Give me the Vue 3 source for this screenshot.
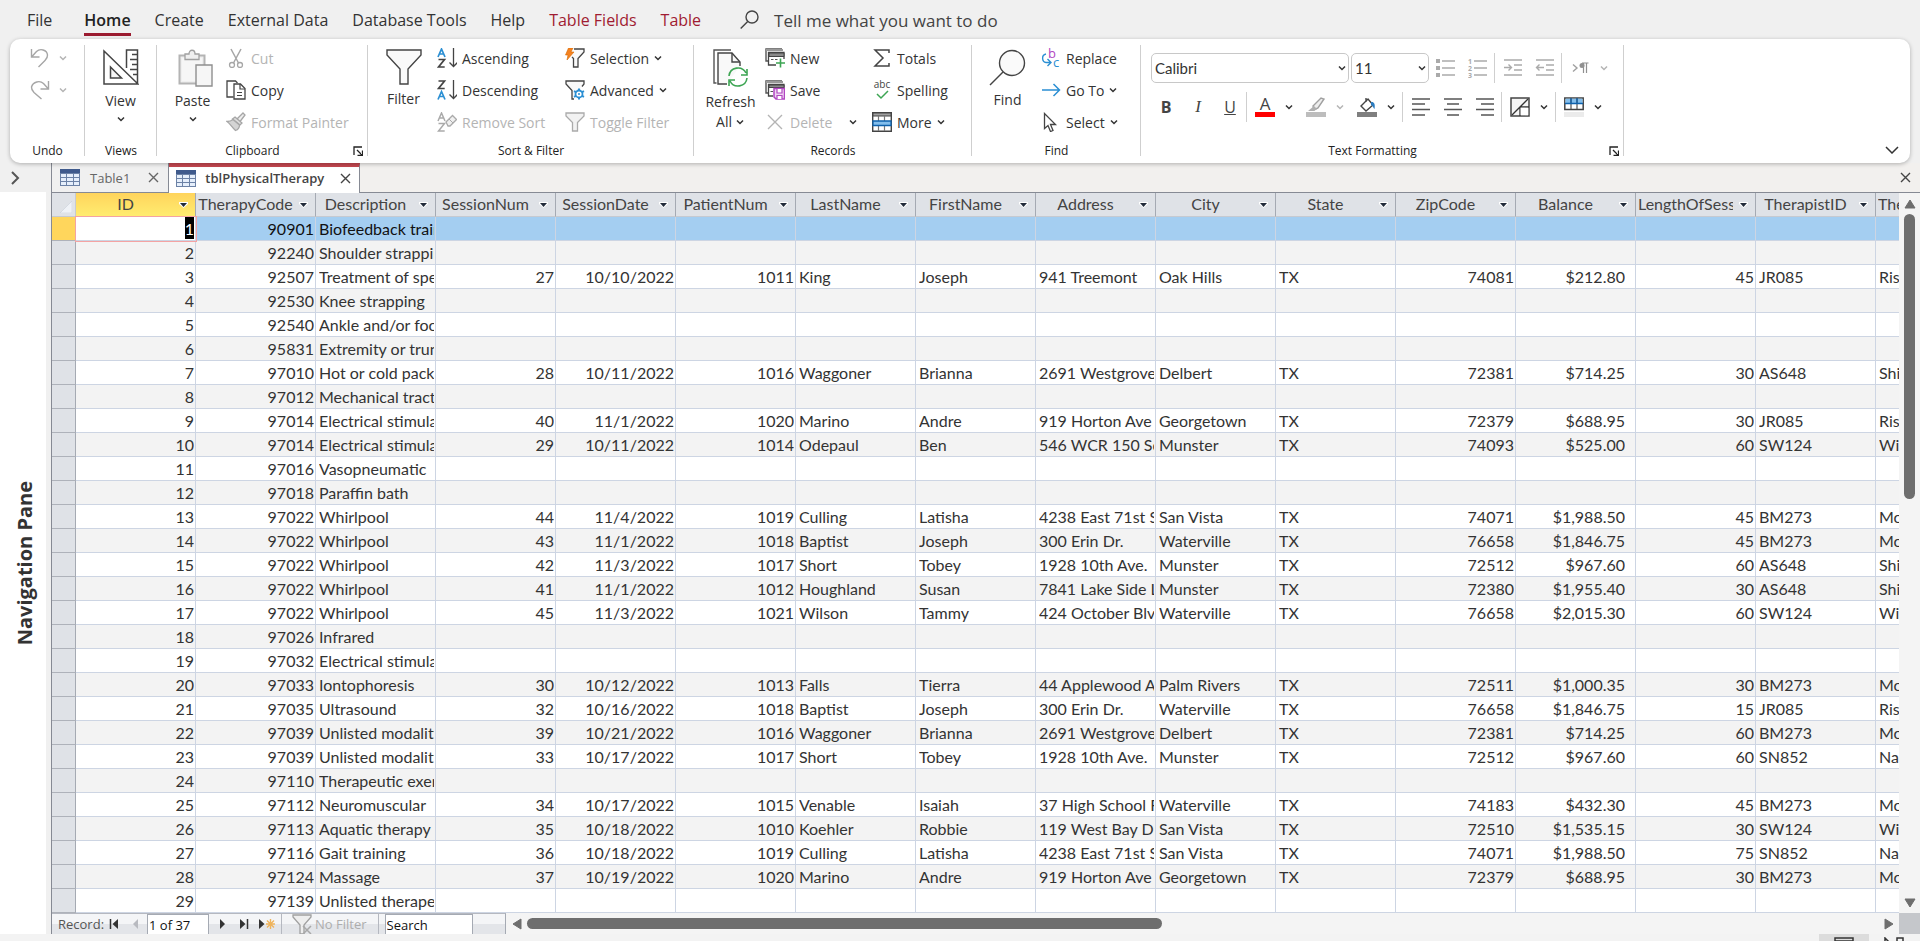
<script setup>
import { h, ref } from 'vue'

const icons = {
  undo: '<path d="M1.500 1v8h8M2 8.500 6.500 3.500C10 .2 17 1.500 17.500 7c.2 2.500-1 4-2.500 5.500L8.500 19" fill="none" stroke="#a6a6a6" stroke-width="1.400"/>',
  redo: '<path d="M18.500 1v8h-8M18 8.500 13.500 3.500C10 .2 3 1.500 1.500 7c-.2 2.500 1 4 2.500 5.500L11.500 19" fill="none" stroke="#a6a6a6" stroke-width="1.400"/>',
  chev: '<path d="m2 3.500 3 3 3-3" fill="none" stroke="currentColor" stroke-width="1.500"/>',
  view: '<path d="M23.500 19V1h11v33M1 2v33h34z" fill="#fff" stroke="#444" stroke-width="1.500"/><path d="M7.500 18v11h11z" fill="#f5f5f5" stroke="#444" stroke-width="1.500"/><path d="M29 5.500h5M27 10.500h7M29 15.500h5M27 20.500h7M30 25.500h4" stroke="#444" stroke-width="1.400"/>',
  paste: '<path d="M1.500 6.500h25v28h-25z" fill="#efefef" stroke="#b4b4b4" stroke-width="2"/><path d="M4 9h20v23H4z" fill="#f6f6f6"/><path d="M7 10.500V5h4c0-5 6-5 6 0h4v5.500z" fill="#efefef" stroke="#a0a0a0" stroke-width="1.300"/><path d="M18 16h16v21H18z" fill="#f6f6f6" stroke="#8f8f8f" stroke-width="1.400"/>',
  cut: '<path d="M5 1l7.500 14M15 1 7.500 15" stroke="#a6a6a6" stroke-width="1.500" fill="none"/><circle cx="6" cy="17" r="2.500" fill="none" stroke="#a6a6a6" stroke-width="1.300"/><circle cx="14" cy="17" r="2.500" fill="none" stroke="#a6a6a6" stroke-width="1.300"/>',
  copy: '<path d="M7.500 17H1V1h8.500l2 2" fill="#fff" stroke="#444" stroke-width="1.300"/><path d="M8 4h6.500L19 8.500V19H8z" fill="#fff" stroke="#444" stroke-width="1.300"/><path d="M14 4v5h5M11 12.500h5M11 15.500h5" fill="none" stroke="#444" stroke-width="1.200"/>',
  painter: '<path d="m11 7 6-6 2 2-5 6.500" fill="#eee" stroke="#a6a6a6" stroke-width="1.300"/><path d="m9 5 7 6-2 2-7.500-6z" fill="#ddd" stroke="#a6a6a6" stroke-width="1.300"/><path d="M7 7.500c-2 1.700-4 2-6 2 3 2 5 6 8.500 9 3-1 4-3 4-5.500z" fill="#d4d4d4" stroke="#a6a6a6" stroke-width="1.300"/>',
  filterBig: '<path d="M1 1h34v5L22 20v15h-8V20L1 6z" fill="#f9f9f9" stroke="#444" stroke-width="1.400"/>',
  asc: '<path d="m1 9 3.500-8L8 9M2.200 6h4.600" fill="none" stroke="#2b8fd3" stroke-width="1.700"/><path d="M1.500 11.500h6l-6 7.500h6.200" fill="none" stroke="#444" stroke-width="1.700"/><path d="M16.500 0v18.500M12.500 14.500l4 4 4-4" fill="none" stroke="#444" stroke-width="1.300"/>',
  desc: '<path d="m1 19.500 3.500-8 3.500 8M2.200 16.500h4.600" fill="none" stroke="#2b8fd3" stroke-width="1.700"/><path d="M1.500 1h6l-6 7.500h6.200" fill="none" stroke="#444" stroke-width="1.700"/><path d="M16.500 0v18.500M12.500 14.500l4 4 4-4" fill="none" stroke="#444" stroke-width="1.300"/>',
  unsort: '<path d="m1 9 3.500-8L8 9M2.200 6h4.600M1.500 11.500h6l-6 7.500h6.200" fill="none" stroke="#aaa" stroke-width="1.500"/><path d="m9 10 6.500-6.500 4 4L13 14H11z" fill="#f0f0f0" stroke="#aaa" stroke-width="1.300"/><path d="m12 7 4 4" stroke="#aaa"/>',
  selection: '<path d="M9 1h10v3l-6 6.500V19H8.500v-8.500L7 9" fill="#f9f9f9" stroke="#444" stroke-width="1.300"/><path d="M3.500 0H8L6 4h3L2 12l1-5H.5z" fill="#f58220" stroke="#d56a00" stroke-width=".6"/>',
  advanced: '<path d="M9 19H7v-8.500L1 4V1h18v3l-2 2.500" fill="#f9f9f9" stroke="#444" stroke-width="1.300"/><circle cx="14" cy="14" r="3.500" fill="#fff" stroke="#2b8fd3" stroke-width="1.800"/><path d="M14 8.500v2M14 17.500v2M9 11.200l2 1M17 15.800l2 1M9 16.800l2-1M17 12.200l2-1" stroke="#2b8fd3" stroke-width="2"/><circle cx="14" cy="14" r="1" fill="#2b8fd3"/>',
  toggle: '<path d="M1 1h18v3l-6.500 6.500V19h-5v-8.500L1 4z" fill="#f2f2f2" stroke="#aaa" stroke-width="1.300"/>',
  refresh: '<path d="M3.500 34H1V1h17" fill="none" stroke="#555" stroke-width="1.400"/><path d="M14 35H5V4h14l8 9v4" fill="#f9f9f9" stroke="#444" stroke-width="1.400"/><path d="M19 4v9h8" fill="none" stroke="#444" stroke-width="1.400"/><path d="M16 27c1-9 13-11 17-3M34 20v6h-6M34 29c-1 9-13 11-17 3M16 37v-6h6" fill="none" stroke="#3da553" stroke-width="1.600"/>',
  rnew: '<path d="M3 13H1V1h16" fill="none" stroke="#555" stroke-width="1.400"/><path d="M1 1h17v2H1z" fill="#999"/><path d="M11 17H3.500V4.500H19V11" fill="#fff" stroke="#444" stroke-width="1.300"/><path d="M4 5h15v3.500H4z" fill="#8a8a8a" stroke="#444" stroke-width="1"/><path d="M6 11.500h2.500M10 11.500h2.500" stroke="#555" stroke-width="1.200"/><path d="M15.500 10.500v9M11 15h9" stroke="#3da553" stroke-width="1.600"/>',
  save: '<path d="M3 13H1V1h16" fill="none" stroke="#555" stroke-width="1.400"/><path d="M1 1h17v2H1z" fill="#999"/><path d="M8 16H3.500V4.500H19V8" fill="#fff" stroke="#444" stroke-width="1.300"/><path d="M4 5h15v2.500H4z" fill="#8a8a8a" stroke="#444" stroke-width="1"/><path d="M5.500 11.500H8" stroke="#555"/><path d="M9 8.500h10.500V19H11l-2-2z" fill="#efd4f2" stroke="#b146c2" stroke-width="1.500"/><path d="M12 9v4h5V9M12 19v-3.500h5V19" fill="#fff" stroke="#b146c2" stroke-width="1.200"/>',
  del: '<path d="m3 3 14 14M17 3 3 17" stroke="#b4b4b4" stroke-width="1.400"/>',
  totals: '<path d="M17 5V2H3l8 8-8 8h14v-3" fill="none" stroke="#444" stroke-width="1.500"/>',
  more: '<path d="M.7.700h18.600v18.600H.7z" fill="#fff" stroke="#444" stroke-width="1.400"/><path d="M1 1h18v3H1z" fill="#a0a0a0" stroke="#444"/><path d="M6.500 4v15M12.500 4v15" stroke="#777" stroke-width="1.200"/><path d="M1 9h18v4.500H1z" fill="#83beec" stroke="#0f62ac" stroke-width="1.300"/>',
  findBig: '<circle cx="23" cy="14" r="12.500" fill="#fafafa" stroke="#444" stroke-width="1.400"/><path d="M14 23 1 36" stroke="#444" stroke-width="1.500"/>',
  arrow: '<path d="M1 10h17M12.500 4l6 6-6 6" fill="none" stroke="#2b8fd3" stroke-width="1.500"/>',
  pointer: '<path d="M3.500 1.500v15l3.500-3 2.500 6 2.500-1-2.500-6h5z" fill="#fff" stroke="#444" stroke-width="1.300"/>',
  bullets: '<path d="M0 1h4v4H0zM0 8h4v4H0zM0 15h4v4H0z" fill="#aaa"/><path d="M6 3h13M6 10h13M6 17h13" stroke="#aaa" stroke-width="1.400"/>',
  indent: '<path d="M1 2h18M11 7h8M11 12h8M1 17h18M1 9.500h7M5.500 6.500l3 3-3 3" fill="none" stroke="#aaa" stroke-width="1.400"/>',
  outdent: '<path d="M1 2h18M11 7h8M11 12h8M1 17h18M1.500 9.500H9M4.500 6.500l-3 3 3 3" fill="none" stroke="#aaa" stroke-width="1.400"/>',
  marker: '<path d="m7 9 8-8 3 1-6 9-4 2z" fill="#eee" stroke="#a0a0a0" stroke-width="1.400"/><path d="m2 14 6-5 3 3-3 2z" fill="#b0b0b0"/><path d="M0 15h20v5H0z" fill="#bdbdbd"/>',
  bucket: '<path d="M9 1v4M4 9l7-7 5 6-7 6z" fill="#fff" stroke="#444" stroke-width="1.400"/><path d="M14 5c3-.5 4.500 2 3.500 7-1.500-1-1-3-3.500-4z" fill="#2b7cc0"/><path d="M0 15h20v5H0z" fill="#7f7f7f"/>',
  left: '<path d="M1 2h18M1 7h13M1 12.500h18M1 18h13" stroke="#555" stroke-width="1.500"/>',
  center: '<path d="M1 2h18M4 7h12M1 12.500h18M4 18h12" stroke="#555" stroke-width="1.500"/>',
  right: '<path d="M1 2h18M6 7h13M1 12.500h18M6 18h13" stroke="#555" stroke-width="1.500"/>',
  gridlines: '<path d="M1 1h18v18H1z" fill="#f5f5f5" stroke="#444" stroke-width="1.500"/><path d="M2 18 18 2M10 10h9M10 10v9" stroke="#333" stroke-width="1.300"/><path d="M10.700 10.700h7.500v7.500h-7.500z" fill="#fff"/>',
  altrow: '<path d="M.8 1h18.400v11.500H.8z" fill="#fff" stroke="#444" stroke-width="1.500"/><path d="M1.500 1.700h17V7h-17z" fill="#83beec"/><path d="M7 1v11M13 1v11" stroke="#555" stroke-width="1.200"/><path d="M1 6.500h18M7 1v5M13 1v5" stroke="#0f62ac" stroke-width="1.300"/><path d="M0 15h20v5H0z" fill="#ebebeb"/>',
  launch: '<path d="M1 9V1h8M4 4l5 5M9.500 4.500v5h-5" fill="none" stroke="#222" stroke-width="1.300"/>',
  search: '<circle cx="12" cy="7" r="6" fill="none" stroke="#444" stroke-width="1.400"/><path d="m7.700 11.500-7 7" stroke="#444" stroke-width="1.400"/>',
  table: '<path d="M0 0h20v17H0z" fill="#6c82a6"/><path d="M0 0h20v4H0z" fill="#3f5a8c"/><path d="M1 5h5v3H1zM7 5h6v3H7zM14 5h5v3h-5zM1 9h5v3H1zM7 9h6v3H7zM14 9h5v3h-5zM1 13h5v3H1zM7 13h6v3H7zM14 13h5v3h-5z" fill="#e6effb"/>',
  close: '<path d="m1 1 9 9M10 1 1 10" stroke="currentColor" stroke-width="1.400"/>',
  nofilter: '<path d="M1 1h18v2l-7 8v9H8v-9L1 3z" fill="#eee" stroke="#a0a0a0" stroke-width="1.300"/><path d="m11 12 8 8M19 12l-8 8" stroke="#a8a8a8" stroke-width="1.500"/>',
}
const boxes = {
  view: [36, 36], paste: [35, 38], filterBig: [36, 36], refresh: [36, 38], findBig: [37, 37],
  chev: [10, 10], launch: [10, 10], search: [20, 20], table: [20, 17], close: [11, 11],
}
const Icon = (props) => {
  const [w, ht] = boxes[props.name] || [20, 20]
  return h('svg', { width: w, height: ht, viewBox: `0 0 ${w} ${ht}`, 'aria-hidden': 'true', innerHTML: icons[props.name] })
}
Icon.props = ['name']

const menus = ['File', 'Home', 'Create', 'External Data', 'Database Tools', 'Help', 'Table Fields', 'Table']
const font = ref('Calibri')
const size = ref('11')
const record = ref('1 of 37')
const query = ref('Search')

const columns = ['ID', 'TherapyCode', 'Description', 'SessionNum', 'SessionDate', 'PatientNum', 'LastName', 'FirstName',
  'Address', 'City', 'State', 'ZipCode', 'Balance', 'LengthOfSession', 'TherapistID', 'TherapistName']
const align = ['r', 'r', '', 'r', 'r', 'r', '', '', '', '', '', 'r', 'money', 'r', '', '']

const patients = {
  1010: ['Koehler', 'Robbie', '119 West Bay Dr.', 'San Vista', '72510', '$1,535.15'],
  1011: ['King', 'Joseph', '941 Treemont', 'Oak Hills', '74081', '$212.80'],
  1012: ['Houghland', 'Susan', '7841 Lake Side Ln', 'Munster', '72380', '$1,955.40'],
  1013: ['Falls', 'Tierra', '44 Applewood Ave', 'Palm Rivers', '72511', '$1,000.35'],
  1014: ['Odepaul', 'Ben', '546 WCR 150 South', 'Munster', '74093', '$525.00'],
  1015: ['Venable', 'Isaiah', '37 High School Rd', 'Waterville', '74183', '$432.30'],
  1016: ['Waggoner', 'Brianna', '2691 Westgrove St', 'Delbert', '72381', '$714.25'],
  1017: ['Short', 'Tobey', '1928 10th Ave.', 'Munster', '72512', '$967.60'],
  1018: ['Baptist', 'Joseph', '300 Erin Dr.', 'Waterville', '76658', '$1,846.75'],
  1019: ['Culling', 'Latisha', '4238 East 71st St', 'San Vista', '74071', '$1,988.50'],
  1020: ['Marino', 'Andre', '919 Horton Ave', 'Georgetown', '72379', '$688.95'],
  1021: ['Wilson', 'Tammy', '424 October Blvd', 'Waterville', '76658', '$2,015.30'],
}
const therapists = { JR085: 'Risk', AS648: 'Shin', SW124: 'Wilde', BM273: 'Mobley', SN852: 'Nash' }
const sessions = [
  ['90901', 'Biofeedback training'],
  ['92240', 'Shoulder strapping'],
  ['92507', 'Treatment of speech', 27, '10/10/2022', 1011, 45, 'JR085'],
  ['92530', 'Knee strapping'],
  ['92540', 'Ankle and/or foot'],
  ['95831', 'Extremity or trunk'],
  ['97010', 'Hot or cold pack', 28, '10/11/2022', 1016, 30, 'AS648'],
  ['97012', 'Mechanical traction'],
  ['97014', 'Electrical stimulation', 40, '11/1/2022', 1020, 30, 'JR085'],
  ['97014', 'Electrical stimulation', 29, '10/11/2022', 1014, 60, 'SW124'],
  ['97016', 'Vasopneumatic'],
  ['97018', 'Paraffin bath'],
  ['97022', 'Whirlpool', 44, '11/4/2022', 1019, 45, 'BM273'],
  ['97022', 'Whirlpool', 43, '11/1/2022', 1018, 45, 'BM273'],
  ['97022', 'Whirlpool', 42, '11/3/2022', 1017, 60, 'AS648'],
  ['97022', 'Whirlpool', 41, '11/1/2022', 1012, 30, 'AS648'],
  ['97022', 'Whirlpool', 45, '11/3/2022', 1021, 60, 'SW124'],
  ['97026', 'Infrared'],
  ['97032', 'Electrical stimulation'],
  ['97033', 'Iontophoresis', 30, '10/12/2022', 1013, 30, 'BM273'],
  ['97035', 'Ultrasound', 32, '10/16/2022', 1018, 15, 'JR085'],
  ['97039', 'Unlisted modality', 39, '10/21/2022', 1016, 60, 'BM273'],
  ['97039', 'Unlisted modality', 33, '10/17/2022', 1017, 60, 'SN852'],
  ['97110', 'Therapeutic exercise'],
  ['97112', 'Neuromuscular', 34, '10/17/2022', 1015, 45, 'BM273'],
  ['97113', 'Aquatic therapy', 35, '10/18/2022', 1010, 30, 'SW124'],
  ['97116', 'Gait training', 36, '10/18/2022', 1019, 75, 'SN852'],
  ['97124', 'Massage', 37, '10/19/2022', 1020, 30, 'BM273'],
  ['97139', 'Unlisted therapeutic'],
]
const rows = sessions.map(([code, desc, num, date, pat, len, th], i) => {
  if (!pat) return [i + 1, code, desc, ...Array(13).fill('')]
  const [last, first, addr, city, zip, bal] = patients[pat]
  return [i + 1, code, desc, num, date, pat, last, first, addr, city, 'TX', zip, bal, len, th, therapists[th]]
})
</script>

<template>
  <div class="app">
    <header class="menubar">
      <nav class="menus" aria-label="Ribbon tabs">
        <button v-for="m in menus" :key="m" type="button" class="menu" :class="{ active: m === 'Home', context: m.startsWith('Table') }">{{ m }}</button>
      </nav>
      <button type="button" class="tell"><Icon name="search" />Tell me what you want to do</button>
    </header>

    <section class="ribbon" aria-label="Home">
      <div class="group undo">
        <div class="body column">
          <div class="row"><button type="button" class="dim" aria-label="Undo"><Icon name="undo" /></button><button type="button" class="drop dim" aria-label="Undo history"><Icon name="chev" /></button></div>
          <div class="row"><button type="button" class="dim" aria-label="Redo"><Icon name="redo" /></button><button type="button" class="drop dim" aria-label="Redo history"><Icon name="chev" /></button></div>
        </div>
        <div class="caption">Undo</div>
      </div>

      <div class="group views">
        <div class="body">
          <button type="button" class="big"><Icon name="view" /><span>View</span><Icon name="chev" /></button>
        </div>
        <div class="caption">Views</div>
      </div>

      <div class="group clipboard">
        <div class="body">
          <button type="button" class="big"><Icon name="paste" /><span>Paste</span><Icon name="chev" /></button>
          <div class="column">
            <button type="button" class="cmd dim"><Icon name="cut" />Cut</button>
            <button type="button" class="cmd"><Icon name="copy" />Copy</button>
            <button type="button" class="cmd dim"><Icon name="painter" />Format Painter</button>
          </div>
        </div>
        <div class="caption with-launch">Clipboard<button type="button" class="launch" aria-label="Clipboard options"><Icon name="launch" /></button></div>
      </div>

      <div class="group sort">
        <div class="body">
          <button type="button" class="big"><Icon name="filterBig" /><span>Filter</span></button>
          <div class="column first">
            <button type="button" class="cmd"><Icon name="asc" />Ascending</button>
            <button type="button" class="cmd"><Icon name="desc" />Descending</button>
            <button type="button" class="cmd dim"><Icon name="unsort" />Remove Sort</button>
          </div>
          <div class="column">
            <button type="button" class="cmd"><Icon name="selection" />Selection<Icon name="chev" /></button>
            <button type="button" class="cmd"><Icon name="advanced" />Advanced<Icon name="chev" /></button>
            <button type="button" class="cmd dim"><Icon name="toggle" />Toggle Filter</button>
          </div>
        </div>
        <div class="caption">Sort &amp; Filter</div>
      </div>

      <div class="group records">
        <div class="body">
          <button type="button" class="big"><Icon name="refresh" /><span>Refresh</span><span class="inline">All<Icon name="chev" /></span></button>
          <div class="column first">
            <button type="button" class="cmd"><Icon name="rnew" />New</button>
            <button type="button" class="cmd"><Icon name="save" />Save</button>
            <div class="row spread"><button type="button" class="cmd dim"><Icon name="del" />Delete</button><button type="button" class="drop" aria-label="Delete options"><Icon name="chev" /></button></div>
          </div>
          <div class="column">
            <button type="button" class="cmd"><Icon name="totals" />Totals</button>
            <button type="button" class="cmd">
              <svg width="20" height="20" viewBox="0 0 20 20" aria-hidden="true"><text x="10" y="8" text-anchor="middle" class="abc">abc</text><path d="m5 14 4 4 7-7" fill="none" stroke="#3da553" stroke-width="1.500" /></svg>Spelling</button>
            <button type="button" class="cmd"><Icon name="more" />More<Icon name="chev" /></button>
          </div>
        </div>
        <div class="caption">Records</div>
      </div>

      <div class="group find">
        <div class="body">
          <button type="button" class="big"><Icon name="findBig" /><span>Find</span></button>
          <div class="column">
            <button type="button" class="cmd">
              <svg width="20" height="20" viewBox="0 0 20 20" aria-hidden="true"><text x="7" y="10" class="rb">b</text><text x="12" y="19" class="rc">c</text><path d="M5 6C0 7 1 14 5 14.500h5M6.500 11l3.500 3.500L6.500 18" fill="none" stroke="#2b8fd3" stroke-width="1.400" /></svg>Replace</button>
            <button type="button" class="cmd"><Icon name="arrow" />Go To<Icon name="chev" /></button>
            <button type="button" class="cmd"><Icon name="pointer" />Select<Icon name="chev" /></button>
          </div>
        </div>
        <div class="caption">Find</div>
      </div>

      <div class="group text">
        <div class="body column">
          <div class="tools">
            <label class="combo wide"><select v-model="font" aria-label="Font"><option>Calibri</option></select><Icon name="chev" /></label>
            <label class="combo"><select v-model="size" aria-label="Font size"><option>11</option></select><Icon name="chev" /></label>
            <button type="button" class="tool" aria-label="Bullets"><Icon name="bullets" /></button>
            <button type="button" class="tool" aria-label="Numbering">
              <svg width="20" height="20" viewBox="0 0 20 20" aria-hidden="true"><text x="0" y="6" class="num">1</text><text x="0" y="13" class="num">2</text><text x="0" y="20" class="num">3</text><path d="M6 3h13M6 10h13M6 17h13" stroke="#aaa" stroke-width="1.400" /></svg>
            </button>
            <i class="rule"></i>
            <button type="button" class="tool" aria-label="Increase indent"><Icon name="indent" /></button>
            <button type="button" class="tool" aria-label="Decrease indent"><Icon name="outdent" /></button>
            <i class="rule"></i>
            <button type="button" class="tool dim para" aria-label="Text direction">
              <svg width="20" height="20" viewBox="0 0 20 20" aria-hidden="true"><path d="m3 6.500 4 3.500-4 3.500" fill="none" stroke="#a0a0a0" stroke-width="1.400" /><path d="M12 5h6.500M13.500 5v10M16.500 5v10" stroke="#909090" stroke-width="1.200" /><circle cx="12" cy="7.500" r="2.500" fill="#909090" /></svg>
            </button>
            <button type="button" class="drop dim" aria-label="Text direction options"><Icon name="chev" /></button>
          </div>
          <div class="tools second">
            <button type="button" class="tool bold">B</button>
            <button type="button" class="tool italic">I</button>
            <button type="button" class="tool under">U</button>
            <i class="rule"></i>
            <button type="button" class="tool fontcolor" aria-label="Font color"><span>A</span></button>
            <button type="button" class="drop spaced" aria-label="Font color options"><Icon name="chev" /></button>
            <button type="button" class="tool" aria-label="Highlight"><Icon name="marker" /></button>
            <button type="button" class="drop dim spaced" aria-label="Highlight options"><Icon name="chev" /></button>
            <button type="button" class="tool" aria-label="Fill"><Icon name="bucket" /></button>
            <button type="button" class="drop spaced" aria-label="Fill options"><Icon name="chev" /></button>
            <i class="rule"></i>
            <button type="button" class="tool" aria-label="Align left"><Icon name="left" /></button>
            <button type="button" class="tool" aria-label="Center"><Icon name="center" /></button>
            <button type="button" class="tool" aria-label="Align right"><Icon name="right" /></button>
            <i class="rule"></i>
            <button type="button" class="tool" aria-label="Gridlines"><Icon name="gridlines" /></button>
            <button type="button" class="drop spaced" aria-label="Gridline options"><Icon name="chev" /></button>
            <i class="rule"></i>
            <button type="button" class="tool" aria-label="Alternate row color"><Icon name="altrow" /></button>
            <button type="button" class="drop" aria-label="Row color options"><Icon name="chev" /></button>
          </div>
        </div>
        <div class="caption with-launch">Text Formatting<button type="button" class="launch" aria-label="Text formatting options"><Icon name="launch" /></button></div>
      </div>
      <button type="button" class="collapse" aria-label="Collapse ribbon">
        <svg width="14" height="8" viewBox="0 0 14 8" aria-hidden="true"><path d="m1 1 6 6 6-6" fill="none" stroke="#333" stroke-width="1.500" /></svg>
      </button>
    </section>

    <main class="work">
      <aside class="navpane">
        <button type="button" class="expand" aria-label="Open navigation pane">
          <svg width="9" height="14" viewBox="0 0 9 14" aria-hidden="true"><path d="m1 1 6 6-6 6" fill="none" stroke="#555" stroke-width="2" /></svg>
        </button>
        <div class="navbody"><span>Navigation Pane</span></div>
      </aside>

      <div class="doc">
        <div class="tabs">
          <div class="tab"><Icon name="table" /><a href="#table1">Table1</a><button type="button" aria-label="Close Table1"><Icon name="close" /></button></div>
          <div class="tab current"><Icon name="table" /><a href="#tbl">tblPhysicalTherapy</a><button type="button" aria-label="Close tblPhysicalTherapy"><Icon name="close" /></button></div>
          <button type="button" class="closeall" aria-label="Close"><Icon name="close" /></button>
        </div>

        <div class="sheet">
          <div class="grid">
            <table>
              <colgroup><col class="selcol"><col v-for="c in columns" :key="c" class="datacol"></colgroup>
              <thead>
                <tr>
                  <th class="sel"><svg width="12" height="12" viewBox="0 0 12 12" aria-hidden="true"><path d="M12 0v12H0z" fill="#eff2f7" stroke="#c3cad5" stroke-width=".5" /></svg></th>
                  <th v-for="(c, i) in columns" :key="c" :class="{ hot: i === 0 }">
                    <div class="head"><span>{{ c }}</span>
                      <button type="button" :aria-label="'Sort ' + c"><svg width="9" height="6" viewBox="0 0 9 6" aria-hidden="true"><path d="M0 0h9v2L4.500 6 0 2z" fill="#fff" /><path d="M1 1h7L4.500 5z" fill="#222b3a" /></svg></button>
                    </div>
                  </th>
                </tr>
              </thead>
              <tbody>
                <tr v-for="(r, n) in rows" :key="n" :class="{ picked: n === 0 }">
                  <td class="sel"></td>
                  <td v-for="(v, i) in r" :key="i" :class="align[i]"><div class="cell"><mark v-if="n === 0 && i === 0">{{ v }}</mark><template v-else>{{ v }}</template></div></td>
                </tr>
              </tbody>
            </table>
          </div>
          <div class="vscroll">
            <svg width="12" height="10" viewBox="0 0 12 10" aria-hidden="true"><path d="M6 1 11 9H1z" fill="#6e6e6e" stroke="#6e6e6e" stroke-linejoin="round" /></svg>
            <div class="vtrack"><div class="vthumb"></div></div>
            <svg width="12" height="10" viewBox="0 0 12 10" aria-hidden="true"><path d="M6 9 11 1H1z" fill="#6e6e6e" stroke="#6e6e6e" stroke-linejoin="round" /></svg>
          </div>
        </div>

        <div class="bottom">
          <div class="recordbar">
            <label for="rec">Record:</label>
            <button type="button" class="step" aria-label="First record"><svg width="10" height="10" viewBox="0 0 10 10"><path d="M1.500 0v10" stroke="#333" stroke-width="1.500" /><path d="M9 0v10L3.500 5z" fill="#333" /></svg></button>
            <button type="button" class="step" aria-label="Previous record"><svg width="10" height="10" viewBox="0 0 10 10"><path d="M7 0v10L2 5z" fill="#b8bac0" /></svg></button>
            <input id="rec" v-model="record" type="text" class="rec">
            <button type="button" class="step" aria-label="Next record"><svg width="10" height="10" viewBox="0 0 10 10"><path d="M3 0v10l5-5z" fill="#333" /></svg></button>
            <button type="button" class="step" aria-label="Last record"><svg width="10" height="10" viewBox="0 0 10 10"><path d="M8.500 0v10" stroke="#333" stroke-width="1.500" /><path d="M1 0v10l5.500-5z" fill="#333" /></svg></button>
            <button type="button" class="step wide" aria-label="New record"><svg width="16" height="10" viewBox="0 0 16 10"><path d="M0 0v10l5.500-5z" fill="#333" /><path d="M11.500 0v10M7 5h9M8 1.500l7 7M15 1.500l-7 7" stroke="#efb45c" stroke-width="1.400" /></svg></button>
            <span class="nofilter"><Icon name="nofilter" />No Filter</span>
            <input v-model="query" type="text" class="query" aria-label="Search records">
          </div>
          <div class="hscroll">
            <svg width="10" height="12" viewBox="0 0 10 12" aria-hidden="true"><path d="M1 6 9 1v10z" fill="#6e6e6e" stroke="#6e6e6e" stroke-linejoin="round" /></svg>
            <div class="htrack"><div class="hthumb"></div></div>
            <svg width="10" height="12" viewBox="0 0 10 12" aria-hidden="true"><path d="M9 6 1 1v10z" fill="#6e6e6e" stroke="#6e6e6e" stroke-linejoin="round" /></svg>
          </div>
          <div class="corner"></div>
        </div>
      </div>
    </main>

    <footer class="status">
      <button type="button" class="mode on" aria-label="Datasheet view"><svg width="20" height="16" viewBox="0 0 20 16"><path d="M1 1h18v14H1zM1 4h18M7 4v11M13 4v11" fill="none" stroke="#333" stroke-width="1.500" /></svg></button>
      <button type="button" class="mode" aria-label="Design view"><svg width="20" height="16" viewBox="0 0 20 16"><path d="M1 1v14h14zM13 8V1h6v14" fill="none" stroke="#333" stroke-width="1.500" /></svg></button>
    </footer>
  </div>
</template>

<style>
html, body { margin: 0; background: #f3f3f3; }
</style>

<style scoped>
.app { height: 100vh; display: flex; flex-direction: column; overflow: hidden; background: #f0f0f0; color: #333; font-family: "Open Sans", "Noto Sans", sans-serif; font-size: 14px; }
button { margin: 0; padding: 0; border: 0; background: none; font: inherit; color: inherit; display: inline-flex; align-items: center; white-space: nowrap; }
svg { display: block; flex: none; }

.menubar { flex: none; height: 39px; display: flex; align-items: flex-start; padding-left: 27px; font-size: 16px; }
.menus { display: flex; gap: 24px; }
.menu { height: 36px; padding-top: 6px; border-bottom: 3px solid transparent; box-sizing: border-box; }
.menu:first-child { margin-right: 8px; }
.menu.active { font-weight: 600; color: #222; border-bottom-color: #9b1b30; }
.menu.context { color: #a01c32; }
.tell { height: 40px; margin-left: 39px; gap: 14px; font-size: 17px; color: #444; }

.ribbon { flex: none; position: relative; z-index: 1; height: 124px; margin: 0 10px; padding-top: 3px; box-sizing: border-box; display: flex; background: #fff; border-radius: 10px; box-shadow: 0 1px 4px rgba(0, 0, 0, .28); }
.group { position: relative; display: flex; flex-direction: column; box-sizing: border-box; }
.group::after { content: ""; position: absolute; right: 0; top: 3px; bottom: 7px; width: 1px; background: #cfcfcf; }
.undo { width: 75px; } .views { width: 72px; } .clipboard { width: 211px; } .sort { width: 326px; }
.records { width: 278px; } .find { width: 169px; } .text { width: 483px; }
.body { height: 96px; display: flex; }
.column { display: flex; flex-direction: column; align-items: flex-start; }
.row { display: flex; height: 32px; align-items: center; }
.undo .row { padding-left: 20px; gap: 5px; }
.undo .row button { height: 32px; }
.caption { height: 25px; display: flex; align-items: center; justify-content: center; font-size: 12px; color: #222; }
.with-launch { position: relative; padding-right: 20px; }
.launch { position: absolute; right: 5px; top: 8px; }
.cmd { height: 32px; gap: 5px; }
.cmd svg:last-child:not(:first-child) { margin-left: -1px; }
.dim { color: #b4b4b4; }
.big { flex-direction: column; padding-top: 7px; box-sizing: border-box; height: 96px; }
.big svg + span { margin-top: 6px; line-height: 20px; }
.views .big { width: 71px; }
.views .big svg:last-child, .clipboard .big svg:last-child { margin-top: 3px; }
.clipboard .big { width: 69px; padding-left: 2px; }
.clipboard .big svg:first-child { margin-left: 6px; }
.clipboard .big span { margin-top: 4px; }
.sort .big { width: 69px; padding-left: 2px; }
.sort .big span, .find .big span { margin-top: 4px; }
.sort .first { width: 128px; }
.records .big { width: 71px; padding-left: 2px; }
.records .big .inline { display: flex; align-items: center; margin: 0; line-height: 20px; gap: 3px; }
.records .big svg + span { margin-top: 5px; }
.records .first { width: 107px; }
.spread { justify-content: space-between; width: 96px; }
.find .big { width: 69px; padding-left: 2px; }
.abc { font: 10px "Open Sans", sans-serif; fill: #444; }
.rb { font: 13px "Open Sans", sans-serif; fill: #b146c2; }
.rc { font: 13px "Open Sans", sans-serif; fill: #2b8fd3; }
.num { font: bold 7px "Open Sans", sans-serif; fill: #aaa; }

.tools { display: flex; align-items: center; height: 30px; margin: 11px 0 0 10px; }
.tools.second { margin: 9px 0 0 9px; }
.combo { position: relative; width: 78px; height: 30px; margin-right: 1px; }
.combo.wide { width: 198px; margin-right: 2px; }
.combo select { width: 100%; height: 30px; appearance: none; border: 1px solid #c8c8c8; border-radius: 5px; background: #fff; padding: 0 3px; font: 15px Lato, "Open Sans", sans-serif; color: #333; }
.combo svg { position: absolute; right: 2px; top: 10px; pointer-events: none; color: #333; }
.tool { width: 32px; height: 30px; justify-content: center; color: #444; }
.drop { width: 16px; height: 30px; justify-content: center; }
.spaced { margin-right: 3px; }
.rule { width: 1px; height: 30px; margin-right: 2px; background: #cfcfcf; }
.bold { font-weight: 700; font-size: 16px; }
.italic { font: italic 17px "Liberation Serif", serif; }
.under { font-size: 16px; text-decoration: underline; }
.fontcolor span { width: 20px; height: 20px; border-bottom: 5px solid #f00; box-sizing: border-box; line-height: 14px; font-size: 17px; text-align: center; }
.collapse { margin: 104px 11px 0 auto; align-self: flex-start; }

.work { flex: 1; min-height: 0; display: flex; }
.navpane { width: 51px; flex: none; display: flex; flex-direction: column; }
.expand { height: 29px; padding-left: 11px; }
.navbody { flex: 1; margin-right: 5px; padding-left: 3px; background: #fff; display: flex; align-items: center; justify-content: center; }
.navbody span { writing-mode: vertical-rl; transform: rotate(180deg); font-size: 20px; font-weight: 700; line-height: 24px; }
.doc { flex: 1; min-width: 0; display: flex; flex-direction: column; border-left: 1px solid #868a94; }
.tabs { flex: none; height: 30px; box-sizing: border-box; display: flex; background: #f2f0ee; border-bottom: 1px solid #868a94; }
.tab { display: flex; align-items: center; padding: 0 9px 0 8px; border-right: 1px solid #868a94; background: #f0f0f0; font-size: 13px; color: #666; }
.tab a { margin: 0 18px 0 10px; color: inherit; text-decoration: none; }
.tab.current { background: #fff; border-top: 4px solid #c4474f; margin-bottom: -1px; padding: 0 8px 4px 7px; font-weight: 600; color: #444; }
.tab.current a { margin: 0 16px 0 9px; }
.closeall { margin: 0 9px 0 auto; color: #444; }

.sheet { flex: 1; min-height: 0; display: flex; background: #fff; }
.grid { flex: 1; min-width: 0; overflow: hidden; font-family: Lato, "Open Sans", sans-serif; font-size: 16px; }
table { table-layout: fixed; border-collapse: separate; border-spacing: 0; width: 1944px; }
.selcol { width: 24px; } .datacol { width: 120px; }
th, td { box-sizing: border-box; height: 24px; padding: 0; border-right: 1px solid #cdd5e3; border-bottom: 1px solid #cdd5e3; font-weight: 400; line-height: 23px; }
th { background: #dfe2e7; border-right-color: #a5aab3; border-bottom-color: #c6cad1; color: #444; }
.hot { background: linear-gradient(#ffd45c, #ffec70); }
.sel { background: #dfe2e7; border-right-color: #a5aab3; border-bottom-color: #aeb2ba; }
th.sel { border-right-color: #c6cad1; border-bottom-color: #c6cad1; }
th.sel svg { margin: 4px 0 0 8px; }
.head { display: flex; align-items: center; height: 23px; padding: 0 7px 0 2px; line-height: 21px; }
.head span { flex: 1; height: 23px; margin-right: 6px; overflow: hidden; white-space: nowrap; text-align: center; }
.cell { height: 23px; margin: 0 1px 0 3px; overflow: hidden; white-space: nowrap; text-align: left; }
.r .cell { text-align: right; }
.money .cell { text-align: right; margin-right: 10px; }
tbody tr:nth-child(even) td:not(.sel) { background: #f3f3f3; }
.picked td { background: #a4cef1; color: #111; }
.picked td.sel { background: #ffd65c; }
.picked td.sel + td { background: #fff; outline: 1px solid #f4a3a3; }
mark { display: inline-block; height: 22px; background: #000; color: #fff; }
.vscroll { width: 21px; flex: none; display: flex; flex-direction: column; align-items: center; padding: 6px 0 5px; box-sizing: border-box; background: #f4f4f4; }
.vtrack { flex: 1; margin: 5px 0; width: 11px; }
.vthumb { height: 42%; border-radius: 6px; background: #6e6e6e; }

.bottom { flex: none; height: 21px; display: flex; }
.recordbar { width: 454px; flex: none; box-sizing: border-box; display: flex; align-items: center; overflow: hidden; background: linear-gradient(#f4f5f7 50%, #e3e5e9 50%); border-top: 1px solid #b5b8c0; border-right: 1px solid #a5aab3; font-size: 13px; padding-left: 6px; color: #555; }
.recordbar input { height: 20px; box-sizing: border-box; border: 1px solid #a5aab3; border-bottom: 0; background: #fff; padding: 0 1px; font: 13px "Open Sans", sans-serif; color: #111; }
.step { width: 22px; height: 20px; justify-content: center; }
.step.wide { width: 24px; }
.recordbar label { width: 45px; white-space: nowrap; }
.rec { width: 62px; margin: 0 2px 0 0; }
.nofilter { display: flex; align-items: center; gap: 3px; margin: 0 6px 0 2px; padding: 0 11px 0 10px; border: solid #b5b8c0; border-width: 0 1px; color: #adadad; white-space: nowrap; }
.query { width: 88px; }
.hscroll { flex: 1; display: flex; align-items: center; padding: 0 5px 0 6px; background: #f4f4f4; }
.htrack { flex: 1; margin: 0 5px; }
.hthumb { width: 47%; height: 11px; border-radius: 6px; background: #6e6e6e; }
.corner { width: 21px; background: #c5c7cb; }
.status { flex: none; height: 7px; display: flex; justify-content: flex-end; align-items: flex-start; overflow: hidden; background: #f3f3f3; padding-right: 1px; }
.mode { width: 50px; justify-content: center; padding-top: 3px; }
.mode.on { background: #dcdcdc; }
</style>
